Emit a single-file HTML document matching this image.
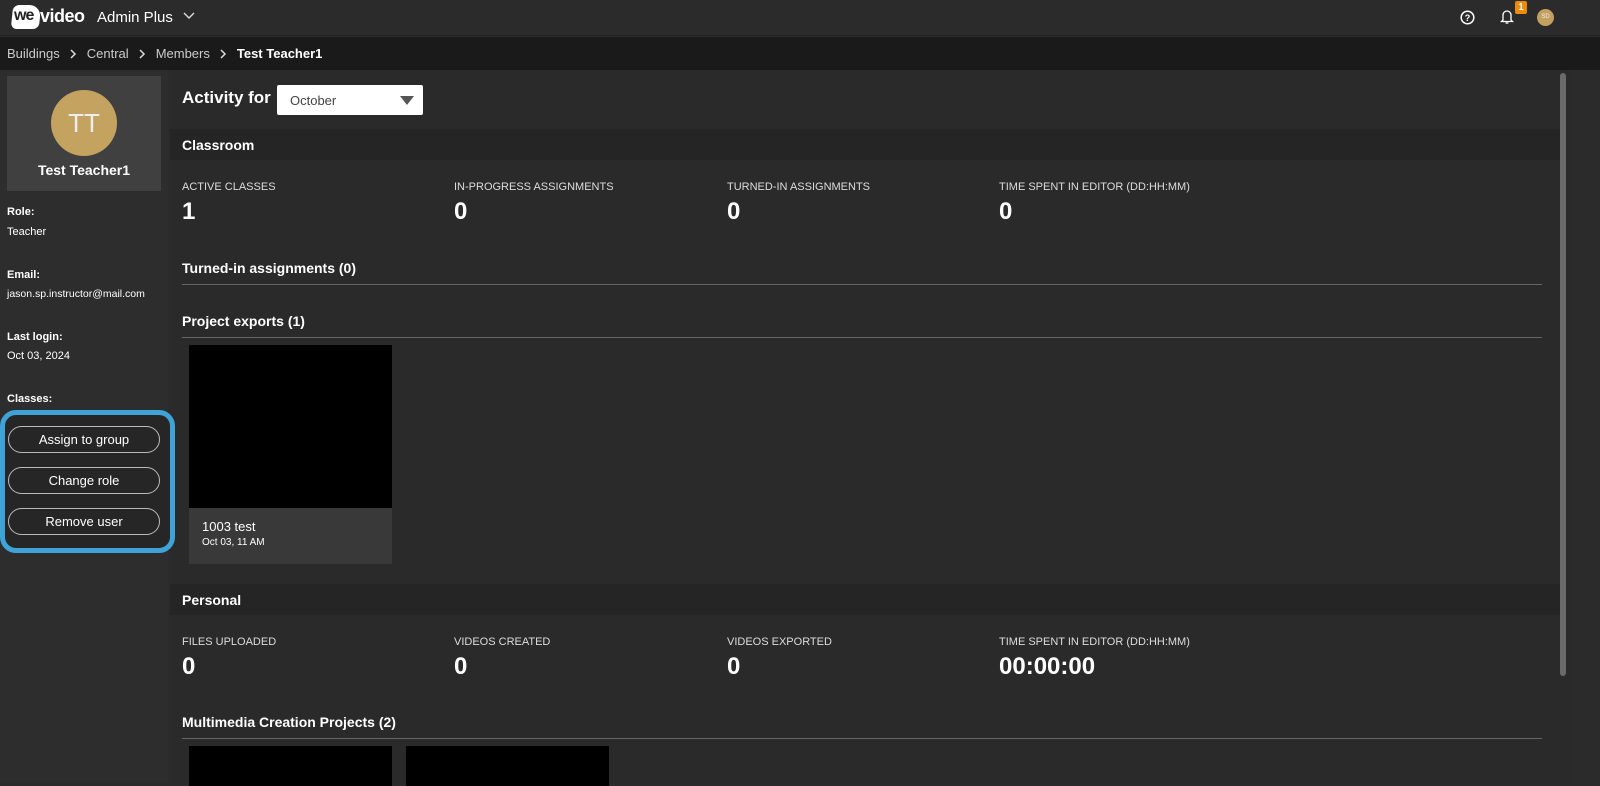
<!DOCTYPE html>
<html><head><meta charset="utf-8"><style>
*{box-sizing:border-box;margin:0;padding:0}
body{width:1600px;height:783px;overflow:hidden;background:#2b2b2b;font-family:"Liberation Sans",sans-serif;color:#fff;position:relative}
.top{position:absolute;left:0;top:0;width:1600px;height:36px;background:#2b2b2b;border-bottom:1px solid #222}
.bc{position:absolute;left:0;top:37px;width:1600px;height:33px;background:#1a1a1a;font-size:13px;color:#ccc;padding:9px 7px;white-space:nowrap}
.bc b{color:#fff}
.bc svg{margin:0 10px 0 10px;vertical-align:-1px}
.side{position:absolute;left:0;top:70px;width:168px;height:713px;background:#2d2d2d;z-index:2}
.main{position:absolute;left:170px;top:70px;width:1390px;height:713px;background:#2a2a2a}
.a{position:absolute}
.lbl{font-size:11px;font-weight:bold}
.val{font-size:11px}
.btn{position:absolute;left:8px;width:152px;height:27px;border:1px solid #bbb;border-radius:14px;background:#262626;font-size:13px;text-align:center;line-height:25px}
.band{position:absolute;left:0;width:1390px;height:31px;background:#252525;font-size:14px;font-weight:bold;padding:8px 12px}
.st{position:absolute;font-size:11px;color:#ddd}
.num{position:absolute;font-size:24px;font-weight:bold}
.h{position:absolute;left:12px;font-size:14px;font-weight:bold}
.line{position:absolute;left:12px;width:1360px;height:1px;background:#666}
</style></head><body>
<div class="top">
 <div class="a" style="left:12px;top:5px;width:28px;height:24px;background:#fff;border-radius:6px 12px 6px 6px;transform:skewX(-6deg)"></div>
 <div class="a" style="left:14px;top:7px;font-size:16px;font-weight:bold;color:#222;letter-spacing:-1px">we</div>
 <div class="a" style="left:40px;top:6px;font-size:18px;font-weight:bold;color:#fff;letter-spacing:-0.5px">video</div>
 <div class="a" style="left:97px;top:9px;font-size:15px">Admin Plus</div>
 <svg class="a" style="left:183px;top:12px" width="12" height="8"><path d="M1 1l5 5 5-5" stroke="#ddd" fill="none" stroke-width="1.4"/></svg>
 <svg class="a" style="left:1460px;top:10px" width="15" height="15"><circle cx="7.5" cy="7.5" r="6.3" stroke="#fff" fill="none" stroke-width="1.5"/><text x="7.5" y="11" font-size="9" font-weight="bold" fill="#fff" text-anchor="middle" font-family="Liberation Sans">?</text></svg>
 <svg class="a" style="left:1500px;top:9px" width="14" height="16"><path d="M3 11V6a4 4 0 0 1 8 0v5l1.5 1.5h-11z M5.5 14h3" stroke="#fff" fill="none" stroke-width="1.3"/></svg>
 <div class="a" style="left:1515px;top:1px;width:12px;height:13px;background:#f08a00;border-radius:2px;font-size:10px;font-weight:bold;text-align:center;line-height:13px">1</div>
 <div class="a" style="left:1537px;top:9px;width:17px;height:17px;border-radius:50%;background:#c4a060;font-size:6px;text-align:center;line-height:17px;color:#eee">SD</div>
</div>
<div class="bc">Buildings<svg width="7" height="10"><path d="M1 1l4 4-4 4" stroke="#ddd" fill="none" stroke-width="1.5"/></svg>Central<svg width="7" height="10"><path d="M1 1l4 4-4 4" stroke="#ddd" fill="none" stroke-width="1.5"/></svg>Members<svg width="7" height="10"><path d="M1 1l4 4-4 4" stroke="#ddd" fill="none" stroke-width="1.5"/></svg><b>Test Teacher1</b></div>
<div class="side">
 <div class="a" style="left:7px;top:6px;width:154px;height:115px;background:#404040"></div>
 <div class="a" style="left:51px;top:20px;width:66px;height:66px;border-radius:50%;background:#c4a25f;font-size:26px;text-align:center;line-height:66px;color:#eee">TT</div>
 <div class="a" style="left:0;top:92px;width:168px;text-align:center;font-size:14px;font-weight:bold">Test Teacher1</div>
 <div class="a lbl" style="left:7px;top:136px">Role:</div>
 <div class="a val" style="left:7px;top:156px">Teacher</div>
 <div class="a lbl" style="left:7px;top:199px">Email:</div>
 <div class="a val" style="left:7px;top:218px;font-size:10.5px">jason.sp.instructor@mail.com</div>
 <div class="a lbl" style="left:7px;top:261px">Last login:</div>
 <div class="a val" style="left:7px;top:280px">Oct 03, 2024</div>
 <div class="a lbl" style="left:7px;top:323px">Classes:</div>
 <div class="a" style="left:0;top:340px;width:175px;height:143px;border:5px solid #3fa3d8;border-radius:16px;background:#262626"></div>
 <div class="btn" style="top:356px">Assign to group</div>
 <div class="btn" style="top:397px">Change role</div>
 <div class="btn" style="top:438px">Remove user</div>
</div>
<div class="main">
 <div class="a" style="left:12px;top:18px;font-size:17px;font-weight:bold">Activity for</div>
 <div class="a" style="left:107px;top:15px;width:146px;height:30px;background:#fff;border-radius:2px;color:#444;font-size:13px;padding:8px 13px">October</div>
 <svg class="a" style="left:230px;top:26px" width="14" height="9"><path d="M0 0h14L7 9z" fill="#555"/></svg>
 <div class="band" style="top:59px">Classroom</div>
 <div class="st" style="left:12px;top:111px">ACTIVE CLASSES</div><div class="num" style="left:12px;top:128px">1</div>
 <div class="st" style="left:284px;top:111px">IN-PROGRESS ASSIGNMENTS</div><div class="num" style="left:284px;top:128px">0</div>
 <div class="st" style="left:557px;top:111px">TURNED-IN ASSIGNMENTS</div><div class="num" style="left:557px;top:128px">0</div>
 <div class="st" style="left:829px;top:111px">TIME SPENT IN EDITOR (DD:HH:MM)</div><div class="num" style="left:829px;top:128px">0</div>
 <div class="h" style="top:190px">Turned-in assignments (0)</div>
 <div class="line" style="top:214px"></div>
 <div class="h" style="top:243px">Project exports (1)</div>
 <div class="line" style="top:267px"></div>
 <div class="a" style="left:19px;top:275px;width:203px;height:219px;background:#393939"></div>
 <div class="a" style="left:19px;top:275px;width:203px;height:163px;background:#000"></div>
 <div class="a" style="left:32px;top:449px;font-size:13px">1003 test</div>
 <div class="a" style="left:32px;top:467px;font-size:10px">Oct 03, 11 AM</div>
 <div class="band" style="top:514px">Personal</div>
 <div class="st" style="left:12px;top:566px">FILES UPLOADED</div><div class="num" style="left:12px;top:583px">0</div>
 <div class="st" style="left:284px;top:566px">VIDEOS CREATED</div><div class="num" style="left:284px;top:583px">0</div>
 <div class="st" style="left:557px;top:566px">VIDEOS EXPORTED</div><div class="num" style="left:557px;top:583px">0</div>
 <div class="st" style="left:829px;top:566px">TIME SPENT IN EDITOR (DD:HH:MM)</div><div class="num" style="left:829px;top:583px">00:00:00</div>
 <div class="h" style="top:644px">Multimedia Creation Projects (2)</div>
 <div class="line" style="top:668px"></div>
 <div class="a" style="left:19px;top:676px;width:203px;height:40px;background:#000"></div>
 <div class="a" style="left:236px;top:676px;width:203px;height:40px;background:#000"></div>
</div>
<div class="a" style="left:1560px;top:70px;width:10px;height:713px;background:#2a2a2a"></div>
<div class="a" style="left:1560px;top:73px;width:6px;height:603px;background:#6a6a6a;border-radius:3px"></div>
</body></html>
